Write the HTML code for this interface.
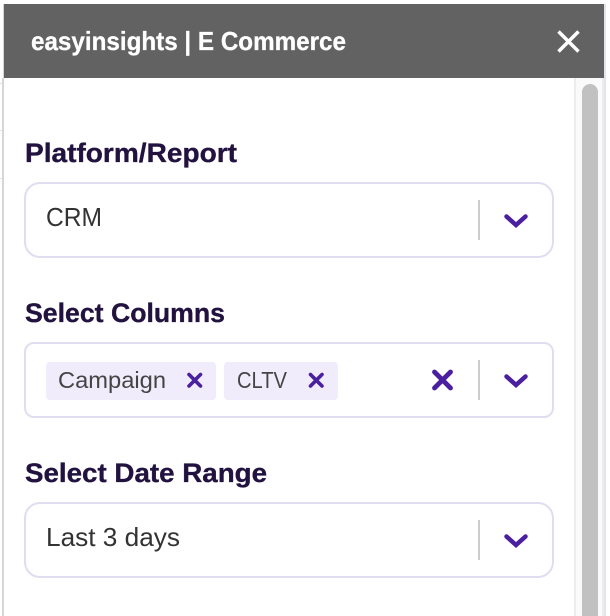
<!DOCTYPE html>
<html>
<head>
<meta charset="utf-8">
<style>
html,body{margin:0;padding:0;background:#fff;width:610px;height:616px;overflow:hidden}
svg{display:block}
text{font-family:"Liberation Sans",sans-serif}
</style>
</head>
<body>
<svg width="610" height="616" viewBox="0 0 610 616" xmlns="http://www.w3.org/2000/svg">
<rect width="610" height="616" fill="#fff"/>
<!-- left backdrop -->
<rect x="0" y="83" width="3" height="1" fill="#e2e2e2"/>
<rect x="0" y="130" width="3" height="1" fill="#e2e2e2"/>
<rect x="0" y="178" width="3" height="1" fill="#e2e2e2"/>
<rect x="2" y="78" width="2" height="538" fill="#d6d6d6"/>
<rect x="3" y="4" width="1" height="74" fill="#d6d6d6"/>
<!-- right backdrop -->
<rect x="604" y="4" width="2" height="612" fill="#e4e2ea"/>
<!-- scrollbar -->
<rect x="574" y="78" width="30" height="538" fill="#fafafa"/>
<rect x="574" y="78" width="2" height="538" fill="#ececec"/>
<rect x="602" y="78" width="2" height="538" fill="#ececec"/>
<path d="M582 616V92a8 8 0 0 1 16 0V616Z" fill="#c1c1c1"/>
<!-- header -->
<rect x="4" y="4" width="600" height="74" fill="#626262"/>
<text x="31" y="50" font-size="26" font-weight="700" fill="#fff" stroke="#fff" stroke-width="0.3" textLength="315" lengthAdjust="spacingAndGlyphs">easyinsights | E Commerce</text>
<path d="M558.500 31.500L578.500 51.500M578.500 31.500L558.500 51.500" stroke="#fff" stroke-width="3.500" fill="none"/>
<!-- labels -->
<g font-size="27" font-weight="700" fill="#22123f" stroke="#22123f" stroke-width="0.35">
<text x="25" y="162" textLength="212" lengthAdjust="spacingAndGlyphs">Platform/Report</text>
<text x="25" y="322" textLength="200" lengthAdjust="spacingAndGlyphs">Select Columns</text>
<text x="25" y="482" textLength="242" lengthAdjust="spacingAndGlyphs">Select Date Range</text>
</g>
<!-- boxes -->
<g fill="#fff" stroke="#e2dcf0" stroke-width="2">
<rect x="25" y="183" width="528" height="74" rx="15"/>
<rect x="25" y="343" width="528" height="74" rx="9"/>
<rect x="25" y="503" width="528" height="74" rx="15"/>
</g>
<!-- values -->
<g font-size="26" fill="#333">
<text x="46" y="226" textLength="56" lengthAdjust="spacingAndGlyphs">CRM</text>
<text x="46" y="546" textLength="134" lengthAdjust="spacingAndGlyphs">Last 3 days</text>
</g>
<!-- tags -->
<rect x="46" y="362" width="170" height="38" rx="4" fill="#f0ecfc"/>
<rect x="224" y="362" width="114" height="38" rx="4" fill="#f0ecfc"/>
<g font-size="23" fill="#444">
<text x="58" y="388" textLength="108" lengthAdjust="spacingAndGlyphs">Campaign</text>
<text x="237" y="388" textLength="50" lengthAdjust="spacingAndGlyphs">CLTV</text>
</g>
<g stroke="#4a1fa0" fill="none" stroke-linecap="round">
<path d="M189 374.500L200.500 386M200.500 374.500L189 386" stroke-width="3.600"/>
<path d="M310.500 374.500L322 386M322 374.500L310.500 386" stroke-width="3.600"/>
<path d="M434.500 372L450.500 388M450.500 372L434.500 388" stroke-width="4.800"/>
<path d="M506.500 216.500L516 225L525.500 216.500" stroke-width="4.500"/>
<path d="M506.500 376.500L516 385L525.500 376.500" stroke-width="4.500"/>
<path d="M506.500 536.500L516 545L525.500 536.500" stroke-width="4.500"/>
</g>
<!-- separators -->
<g fill="#cccccc">
<rect x="478" y="200" width="2" height="40"/>
<rect x="478" y="360" width="2" height="40"/>
<rect x="478" y="520" width="2" height="40"/>
</g>
</svg>
</body>
</html>
